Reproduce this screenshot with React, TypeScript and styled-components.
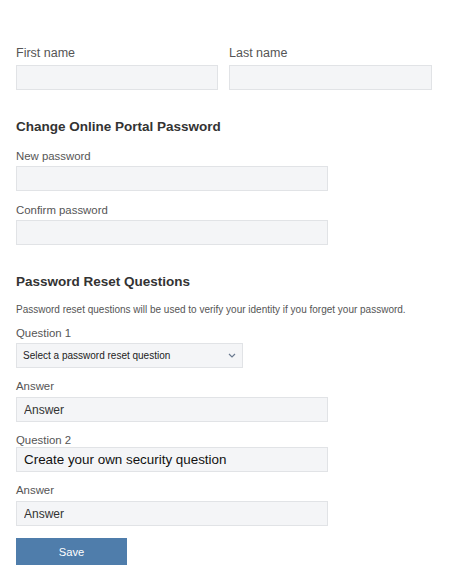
import React from "react";
import styled, { createGlobalStyle } from "styled-components";

const GlobalStyle = createGlobalStyle`
  body {
    margin: 0;
    background: #ffffff;
    font-family: "Liberation Sans", Arial, sans-serif;
    color: #333333;
  }
`;

const Form = styled.form`
  padding: 46px 16px 0;
  width: 452px;
  box-sizing: border-box;
`;

const NameRow = styled.div`
  display: grid;
  grid-template-columns: 202px 203px;
  column-gap: 11px;
`;

const Field = styled.div<{ $gap?: number }>`
  display: flex;
  flex-direction: column;
  margin-top: ${(p) => p.$gap ?? 0}px;
`;

const Label = styled.label<{ $big?: boolean; $space?: number }>`
  display: block;
  font-size: ${(p) => (p.$big ? "12.5px" : "11.4px")};
  line-height: ${(p) => (p.$big ? "15px" : "14px")};
  color: #555555;
  margin-bottom: ${(p) => p.$space ?? 3}px;
`;

const Input = styled.input<{ $w?: number; $large?: boolean }>`
  box-sizing: border-box;
  width: ${(p) => p.$w ?? 312}px;
  height: 25px;
  margin: 0;
  padding: 0 7px;
  background: #f4f5f7;
  border: 1px solid #e1e3e6;
  border-radius: 0;
  font-family: "Liberation Sans", Arial, sans-serif;
  font-size: ${(p) => (p.$large ? "13.4px" : "12px")};
  color: ${(p) => (p.$large ? "#111111" : "#333333")};
  outline: none;
`;

const Heading = styled.h3<{ $top: number }>`
  margin: ${(p) => p.$top}px 0 0;
  font-size: 13.5px;
  line-height: 16px;
  font-weight: 700;
  color: #333333;
`;

const Note = styled.p`
  margin: 14px 0 0;
  font-size: 10px;
  line-height: 12px;
  color: #555555;
`;

const SelectBox = styled.div`
  box-sizing: border-box;
  width: 227px;
  height: 25px;
  display: flex;
  align-items: center;
  justify-content: space-between;
  padding: 0 6px;
  background: #f4f5f7;
  border: 1px solid #e1e3e6;
  font-size: 10px;
  color: #222222;
`;

const SaveButton = styled.button`
  margin-top: 12px;
  width: 111px;
  height: 27px;
  border: none;
  border-radius: 0;
  background: #4f7dab;
  color: #ffffff;
  font-family: "Liberation Sans", Arial, sans-serif;
  font-size: 11.2px;
  cursor: pointer;
`;

function Chevron() {
  return (
    <svg width="8" height="5" viewBox="0 0 8 5" fill="none">
      <path d="M1 1l3 3 3-3" stroke="#6b7a90" strokeWidth="1.2" />
    </svg>
  );
}

export default function App() {
  return (
    <>
      <GlobalStyle />
      <Form onSubmit={(e) => e.preventDefault()}>
        <NameRow>
          <Field>
            <Label $big $space={4}>First name</Label>
            <Input $w={202} />
          </Field>
          <Field>
            <Label $big $space={4}>Last name</Label>
            <Input $w={203} />
          </Field>
        </NameRow>

        <Heading $top={29}>Change Online Portal Password</Heading>
        <Field $gap={14}>
          <Label>New password</Label>
          <Input type="password" />
        </Field>
        <Field $gap={12}>
          <Label>Confirm password</Label>
          <Input type="password" />
        </Field>

        <Heading $top={29}>Password Reset Questions</Heading>
        <Note>
          Password reset questions will be used to verify your identity if you
          forget your password.
        </Note>
        <Field $gap={10}>
          <Label>Question 1</Label>
          <SelectBox>
            <span>Select a password reset question</span>
            <Chevron />
          </SelectBox>
        </Field>
        <Field $gap={11}>
          <Label $space={4}>Answer</Label>
          <Input defaultValue="Answer" />
        </Field>
        <Field $gap={11}>
          <Label $space={0}>Question 2</Label>
          <Input $large defaultValue="Create your own security question" />
        </Field>
        <Field $gap={11}>
          <Label $space={4}>Answer</Label>
          <Input defaultValue="Answer" />
        </Field>
        <SaveButton type="submit">Save</SaveButton>
      </Form>
    </>
  );
}
